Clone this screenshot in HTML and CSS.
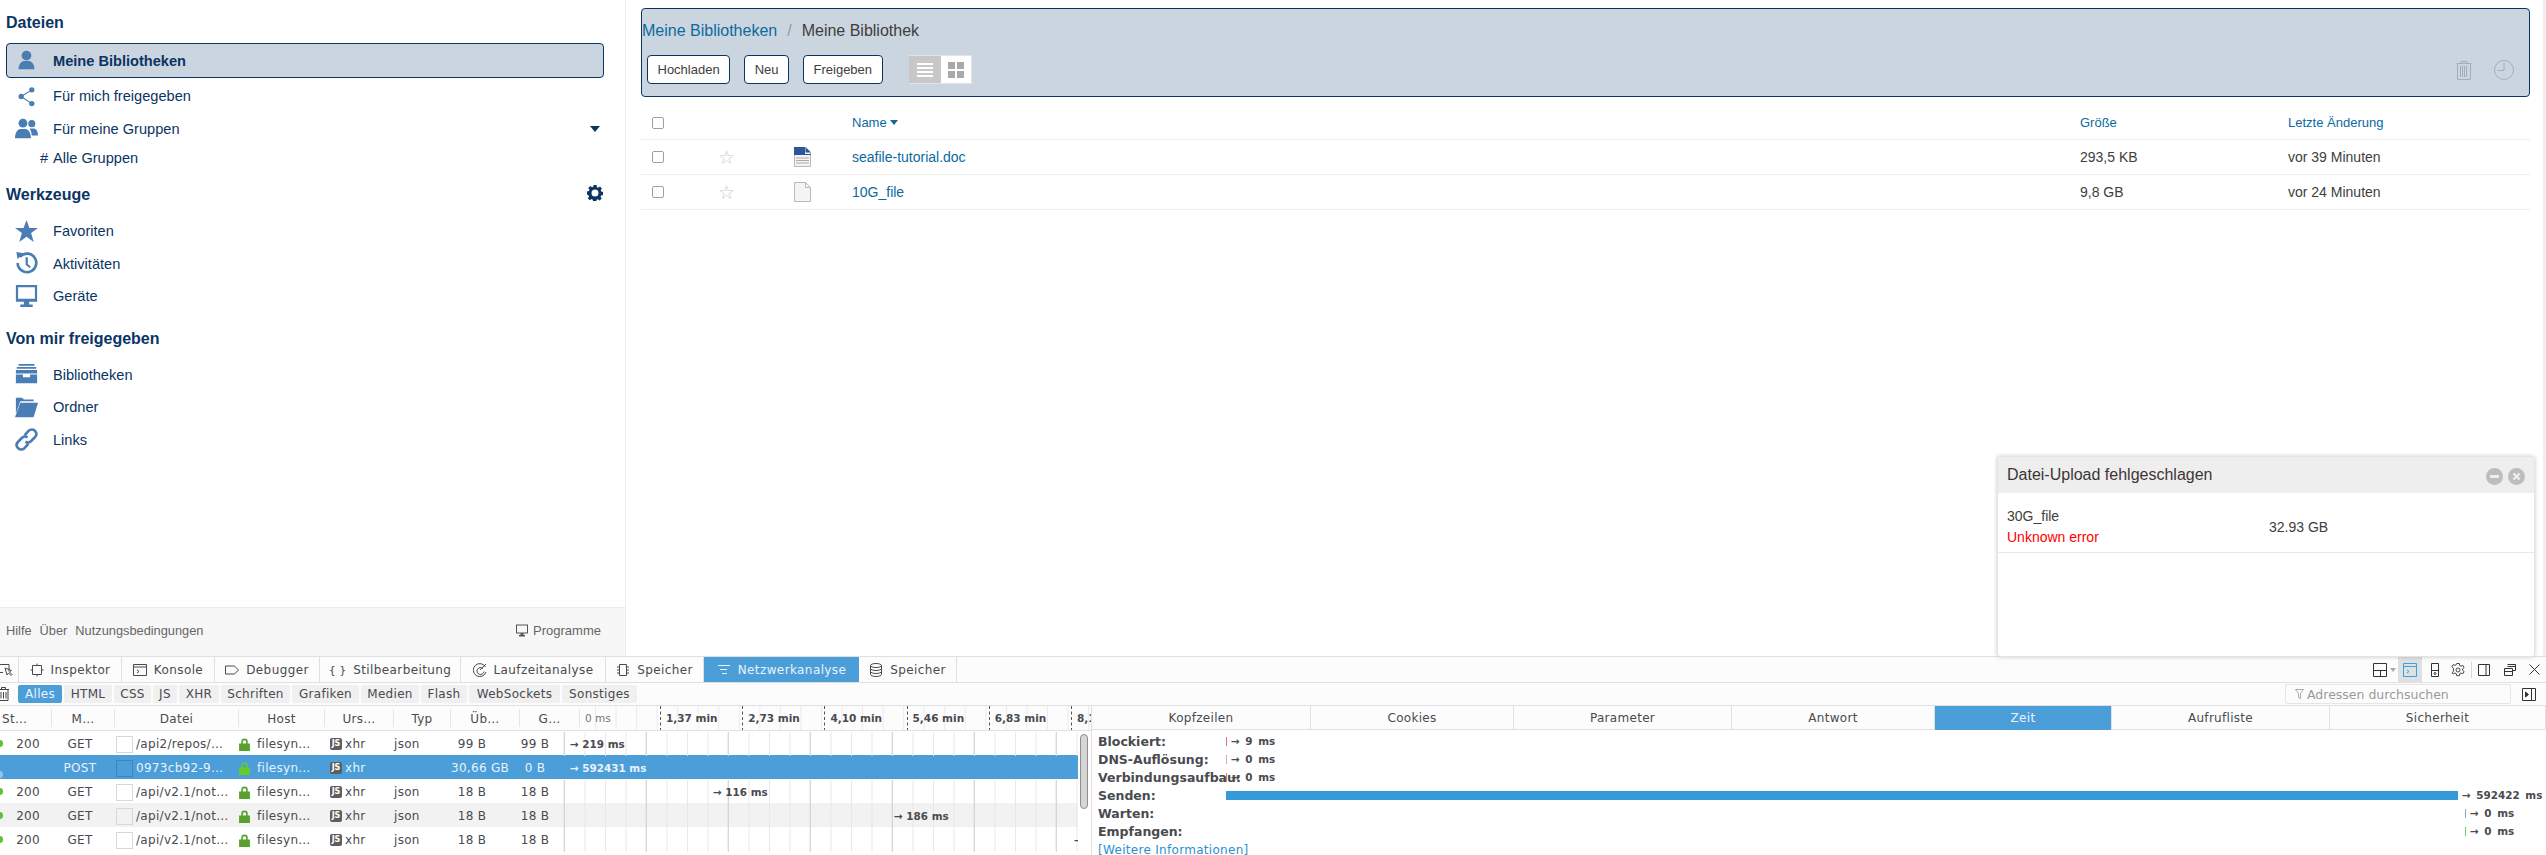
FILE: index.html
```html
<!DOCTYPE html>
<html lang="de">
<head>
    <meta charset="UTF-8">
    <title>Meine Bibliothek</title>
    <link rel="stylesheet" href="styles.css">
</head>
<body>
<div class="app">
    <aside class="sidebar">
        <div class="side-scroll">
            <h3 class="side-title first">Dateien</h3>
            <a class="side-item active">
                <svg class="side-icon" viewBox="0 0 26 26"><circle cx="13" cy="7.500" r="5.500"/><path d="M4 23c0-6 3-9 6-9.500h6c3 .5 6 3.500 6 9.500z"/></svg>
                <span>Meine Bibliotheken</span>
            </a>
            <a class="side-item">
                <svg class="side-icon" viewBox="0 0 26 26"><circle cx="19" cy="5.500" r="3"/><circle cx="7" cy="13" r="3"/><circle cx="19" cy="21" r="3"/><path class="outline thin" d="M7 13l12-7.500M7 13l12 8"/></svg>
                <span>Für mich freigegeben</span>
            </a>
            <a class="side-item">
                <svg class="side-icon" viewBox="0 0 26 26"><circle cx="9" cy="7" r="5"/><circle cx="19" cy="7.500" r="4"/><path d="M0 24c0-7 3-10 6-10.500h6c3 .5 6 3.500 6 10.500z"/><path d="M16.500 13h5c2.500.5 4.500 3 4.500 8h-7c-.3-3-1-6-2.500-8z"/></svg>
                <span>Für meine Gruppen</span>
                <i class="caret"></i>
            </a>
            <a class="side-sub"><span class="hash">#</span>Alle Gruppen</a>

            <h3 class="side-title tools">Werkzeuge
                <svg class="gear" viewBox="0 0 16 16"><path fill-rule="evenodd" d="M6.500 0h3l.4 2.200 1.300.6L12.900 1.500l2 2-1.200 1.800.6 1.300 1.700.4v3l-1.900.4-.6 1.300 1.200 1.700-2 2-1.800-1.200-1.300.6-.4 1.700h-3l-.4-1.800-1.300-.6-1.700 1.200-2-2 1.200-1.700-.6-1.300L0 9.500v-3l1.900-.4.6-1.300-1.200-1.800 2-2 1.700 1.300 1.300-.6zM8 4.500a3.500 3.500 0 1 0 0 7 3.500 3.500 0 0 0 0-7z"/></svg>
            </h3>
            <a class="side-item">
                <svg class="side-icon" viewBox="0 0 26 26"><path d="M13 0l3.300 9h9.700l-7.800 5.800 3 10.200-8.200-6.200L4.800 25l3-10.200L0 9h9.700z"/></svg>
                <span>Favoriten</span>
            </a>
            <a class="side-item">
                <svg class="side-icon" viewBox="0 0 26 26"><path class="outline" d="M5.500 5.500a10.500 10.500 0 1 1-2.500 7"/><path d="M1.500 0l8.500 1.500-7 6.500z"/><path d="M12 6h2.500v7.500l3.500 3-1.500 1.500-4.500-3.500z"/></svg>
                <span>Aktivitäten</span>
            </a>
            <a class="side-item">
                <svg class="side-icon" viewBox="0 0 26 26"><path fill-rule="evenodd" d="M1 0h24v19H16v3h4v3H6v-3h4v-3H1zM3.500 2.500v13h19v-13z"/></svg>
                <span>Geräte</span>
            </a>

            <h3 class="side-title shared">Von mir freigegeben</h3>
            <a class="side-item">
                <svg class="side-icon" viewBox="0 0 26 26"><path d="M4 1h18v2H4zM2 4.500h22v2H2zM1 8h24v4H1zM1 13h8v3h8v-3h8v10H1z"/></svg>
                <span>Bibliotheken</span>
            </a>
            <a class="side-item">
                <svg class="side-icon" viewBox="0 0 26 26"><path d="M1 2h7l2 2h11v2H6L1 20z"/><path d="M6 7.500h20L21 24H0z"/></svg>
                <span>Ordner</span>
            </a>
            <a class="side-item">
                <svg class="side-icon" viewBox="0 0 26 26"><path class="outline" d="M11 8l4-4.500c3-2.500 6-2.300 7.800 0 2 2.300 1.800 4.800-.3 7L18 15c-2 1.800-4.500 1.800-6 .3"/><path class="outline" d="M15 18l-4 4.500c-3 2.500-6 2.300-7.800 0-2-2.300-1.800-4.800.3-7L8 11c2-1.800 4.500-1.800 6-.3"/></svg>
                <span>Links</span>
            </a>
        </div>
        <footer class="side-footer">
            <a>Hilfe</a><a>Über</a><a>Nutzungsbedingungen</a>
            <a class="clients">
                <svg class="clients-icon" viewBox="0 0 12 12"><path fill-rule="evenodd" d="M0 0h12v9H7.500v1.500H9V12H3v-1.500h1.500V9H0zM1 1v7h10V1z"/></svg>
                Programme
            </a>
        </footer>
    </aside>

    <main class="main">
        <div class="toolbar">
            <div class="crumbs"><a>Meine Bibliotheken</a><span class="sep">/</span><span>Meine Bibliothek</span></div>
            <div class="toolbar-row">
                <button class="btn">Hochladen</button>
                <button class="btn">Neu</button>
                <button class="btn">Freigeben</button>
                <div class="view-toggle">
                    <span class="view-btn on">
                        <svg viewBox="0 0 16 16" width="16" height="16" fill="#fff"><path d="M0 1h16v2H0zM0 5h16v2H0zM0 9h16v2H0zM0 13h16v2H0z"/></svg>
                    </span>
                    <span class="view-btn">
                        <svg viewBox="0 0 16 16" width="16" height="16" fill="#a9a9a9"><path d="M0 0h7v7H0zM9 0h7v7H9zM0 9h7v7H0zM9 9h7v7H9z"/></svg>
                    </span>
                </div>
                <div class="toolbar-right">
                    <svg width="16" height="20" viewBox="0 0 16 20" fill="none" stroke="#a5aeb7"><path d="M.5 3.500h15M5 3.500v-2h6v2M1.500 3.500v16h13v-16M4.500 6v11M6.500 6v11M8.500 6v11M10.500 6v11"/></svg>
                    <svg width="20" height="20" viewBox="0 0 20 20" fill="none" stroke="#a5aeb7"><circle cx="10" cy="10" r="9.500"/><path d="M10 3v7.500H3.500"/></svg>
                </div>
            </div>
        </div>
        <div class="file-row head">
            <span class="cell-check"><i class="check"></i></span>
            <span></span><span></span>
            <a class="file-name">Name <i class="sort"></i></a>
            <a>Größe</a>
            <a>Letzte Änderung</a>
        </div>
        <div class="file-row">
            <span class="cell-check"><i class="check"></i></span>
            <span class="star">☆</span>
            <svg class="file-icon" viewBox="0 0 17 20"><path d="M.5.500h11l5 5v14H.500z" fill="#f4f4f4" stroke="#b9b9b9"/><path d="M0 0h11v7h6v1H0z" fill="#2b5797"/><path d="M11.500 0l5.500 5.500h-5.500z" fill="#2b5797"/><path d="M2 11h13M2 13.500h13M2 16h13" stroke="#aaa"/></svg>
            <a class="file-name">seafile-tutorial.doc</a>
            <span>293,5 KB</span>
            <span>vor 39 Minuten</span>
        </div>
        <div class="file-row">
            <span class="cell-check"><i class="check"></i></span>
            <span class="star">☆</span>
            <svg class="file-icon" viewBox="0 0 17 20"><path d="M.5.500h11l5 5v14H.500z" fill="#f4f4f4" stroke="#b9b9b9"/><path d="M11.500.500v5h5" fill="none" stroke="#b9b9b9"/></svg>
            <a class="file-name">10G_file</a>
            <span>9,8 GB</span>
            <span>vor 24 Minuten</span>
        </div>
    </main>

    <section class="upload-popup">
        <div class="popup-head">
            <span>Datei-Upload fehlgeschlagen</span>
            <span class="popup-tools">
                <svg width="17" height="17" viewBox="0 0 17 17"><circle cx="8.500" cy="8.500" r="8.500" fill="#bdbdbd"/><path d="M4 7h9v3H4z" fill="#eee"/></svg>
                <svg width="17" height="17" viewBox="0 0 17 17"><circle cx="8.500" cy="8.500" r="8.500" fill="#bdbdbd"/><path d="M5.500 5.500l6 6M11.500 5.500l-6 6" stroke="#eee" stroke-width="2.400"/></svg>
            </span>
        </div>
        <div class="popup-row">
            <div class="popup-name">30G_file<div class="popup-error">Unknown error</div></div>
            <div>32.93 GB</div>
        </div>
    </section>
</div>

<div class="devtools">
    <div class="dt-tabs">
        <span class="dt-picker">
            <svg width="18" height="18" viewBox="0 0 18 18" fill="none" stroke="#4a4a4f"><path d="M-2 3.500h11v7"/><path d="M-2 11.500h5"/><path d="M5 7l2 7 1.500-2 2.500 2.500 1-1-2.500-2.500 2-1.500z"/></svg>
        </span>
        <span class="dt-tab w-inspector"><svg class="dt-icon" viewBox="0 0 14 14"><path d="M2.500 2.500h9v9h-9zM7 .5v2M7 11.500v2M.5 7h2M11.500 7h2"/></svg>Inspektor</span>
        <span class="dt-tab w-console"><svg class="dt-icon" viewBox="0 0 14 14"><path d="M.5 1.500h13v11H.500zM.5 4h13M4 7l2 1.500L4 10"/></svg>Konsole</span>
        <span class="dt-tab w-debugger"><svg class="dt-icon" viewBox="0 0 14 14"><path d="M.5 3h9l4 4-4 4h-9z"/></svg>Debugger</span>
        <span class="dt-tab w-style"><span class="braces">{ }</span>Stilbearbeitung</span>
        <span class="dt-tab w-perf"><svg class="dt-icon" viewBox="0 0 14 14"><path d="M12.500 4A6.500 6.500 0 1 0 13 9M10 5.500a3.500 3.500 0 1 0 1 3M7 7l6-6"/></svg>Laufzeitanalyse</span>
        <span class="dt-tab w-mem"><svg class="dt-icon" viewBox="0 0 14 14"><path d="M3.500 1.500h7v11h-7zM1 4h2.500M1 7h2.500M1 10h2.500M10.500 4H13M10.500 7H13M10.500 10H13"/></svg>Speicher</span>
        <span class="dt-tab w-net on"><svg class="dt-icon" viewBox="0 0 14 14"><path d="M1 2.500h12M3 6.500h7M5 10.500h5"/></svg>Netzwerkanalyse</span>
        <span class="dt-tab w-store"><svg class="dt-icon" viewBox="0 0 14 14"><ellipse cx="7" cy="2.500" rx="5.500" ry="2"/><path d="M1.500 2.500v9c0 1 2.500 2 5.500 2s5.500-1 5.500-2v-9M1.500 5.500c0 1 2.500 2 5.500 2s5.500-1 5.500-2M1.500 8.500c0 1 2.500 2 5.500 2s5.500-1 5.500-2"/></svg>Speicher</span>
        <div class="dt-actions">
            <svg width="14" height="14" viewBox="0 0 14 14" fill="none" stroke="#333"><path d="M.5.500h13v13H.500zM.5 7.500h13M7.500 7.500v6"/></svg>
            <i class="dock-caret"></i>
            <span class="dt-action-on"><svg width="14" height="14" viewBox="0 0 14 14" fill="none" stroke="#2fa7e0"><path d="M.5.500h13v13H.500zM.5 3.500h13M4 7l2 1.500L4 10"/></svg></span>
            <svg class="act-device" width="8" height="14" viewBox="0 0 8 14" fill="none" stroke="#333"><path d="M.5.500h7v13h-7zM.5 7.500h7"/><circle cx="4" cy="10.500" r="1"/></svg>
            <svg class="act-gear" width="14" height="14" viewBox="0 0 14 14" fill="none" stroke="#444"><circle cx="7" cy="7" r="2"/><path d="M5.700.500h2.600l.4 2 1.300.7 1.800-.8 1.300 2.200-1.500 1.300v1.400l1.500 1.300-1.300 2.200-1.800-.8-1.300.7-.4 2H5.700l-.4-2-1.300-.7-1.800.8L.9 9.800l1.500-1.300V5.100L.9 3.800l1.300-2.200 1.800.8 1.300-.7z"/></svg>
            <i class="act-sep"></i>
            <svg class="act-side" width="12" height="12" viewBox="0 0 12 12" fill="none" stroke="#333"><path d="M.5.500h11v11H.500zM8 .5v11"/></svg>
            <svg class="act-win" width="12" height="12" viewBox="0 0 12 12" fill="none" stroke="#333"><path d="M3.500.500h8v6h-3M.5 4.500h8v7h-8zM.5 7.500h8M3.500 2.500h8"/></svg>
            <svg class="act-close" width="11" height="11" viewBox="0 0 11 11" fill="none" stroke="#333"><path d="M.5.500l10 10M10.500.500l-10 10"/></svg>
        </div>
    </div>

    <div class="dt-filters">
        <svg class="trash" width="9" height="14" viewBox="0 0 9 14" fill="none" stroke="#444"><path d="M-3 2.500h12M-2 2.500v11h10v-11M1 5v6.500M3.500 5v6.500M6 5v6.500M1.500 2.500V.5h4v2"/></svg>
        <span class="flt f-all on">Alles</span>
        <span class="flt f-html">HTML</span>
        <span class="flt f-css">CSS</span>
        <span class="flt f-js">JS</span>
        <span class="flt f-xhr">XHR</span>
        <span class="flt f-font">Schriften</span>
        <span class="flt f-img">Grafiken</span>
        <span class="flt f-med">Medien</span>
        <span class="flt f-flash">Flash</span>
        <span class="flt f-ws">WebSockets</span>
        <span class="flt f-etc">Sonstiges</span>
        <div class="url-filter">
            <svg width="9" height="10" viewBox="0 0 9 10" fill="none" stroke="#aaa"><path d="M.5.500h8L5.500 4.500v5l-2-1v-4z"/></svg>
            Adressen durchsuchen
        </div>
        <svg class="pane-toggle" width="14" height="13" viewBox="0 0 14 13" fill="none" stroke="#333"><path d="M.5.500h13v12H.500zM9.500.500v12"/><path d="M3.500 4v5l3-2.500z" fill="#333"/></svg>
    </div>

    <div class="dt-split">
        <div class="net">
            <div class="net-head">
                <span class="h-status">St…</span>
                <span>M…</span>
                <span>Datei</span>
                <span>Host</span>
                <span>Urs…</span>
                <span>Typ</span>
                <span>Üb…</span>
                <span>G…</span>
                <div class="ticks">
                    <span class="tick-zero">0 ms</span>
                    <span class="tick">1,37 min</span>
                    <span class="tick">2,73 min</span>
                    <span class="tick">4,10 min</span>
                    <span class="tick">5,46 min</span>
                    <span class="tick">6,83 min</span>
                    <span class="tick">8,1</span>
                </div>
            </div>
            <div class="net-body">
                <div class="net-rows">
                    <div class="net-row">
                        <span class="c-status"><i class="dot"></i>200</span><span class="c-method">GET</span>
                        <span class="c-file"><i class="thumb"></i>/api2/repos/…</span>
                        <span class="c-host"><svg class="lock" viewBox="0 0 10 12"><path d="M2 5V3.500a3 3 0 0 1 6 0V5h2v7H0V5zM3.500 5h3V3.500a1.500 1.500 0 0 0-3 0z"/></svg>filesyn…</span>
                        <span class="c-cause"><b class="js">JS</b>xhr</span><span>json</span>
                        <span class="c-size">99 B</span><span class="c-size2">99 B</span>
                        <span class="c-wf"><b style="margin-left:20px">→ 219 ms</b></span>
                    </div>
                    <div class="net-row sel">
                        <span class="c-status"><i class="dot"></i></span><span class="c-method">POST</span>
                        <span class="c-file"><i class="thumb"></i>0973cb92-9…</span>
                        <span class="c-host"><svg class="lock" viewBox="0 0 10 12"><path d="M2 5V3.500a3 3 0 0 1 6 0V5h2v7H0V5zM3.500 5h3V3.500a1.500 1.500 0 0 0-3 0z"/></svg>filesyn…</span>
                        <span class="c-cause"><b class="js">JS</b>xhr</span><span></span>
                        <span class="c-size">30,66 GB</span><span class="c-size2">0 B</span>
                        <span class="c-wf"><b style="margin-left:20px">→ 592431 ms</b></span>
                    </div>
                    <div class="net-row">
                        <span class="c-status"><i class="dot"></i>200</span><span class="c-method">GET</span>
                        <span class="c-file"><i class="thumb"></i>/api/v2.1/not…</span>
                        <span class="c-host"><svg class="lock" viewBox="0 0 10 12"><path d="M2 5V3.500a3 3 0 0 1 6 0V5h2v7H0V5zM3.500 5h3V3.500a1.500 1.500 0 0 0-3 0z"/></svg>filesyn…</span>
                        <span class="c-cause"><b class="js">JS</b>xhr</span><span>json</span>
                        <span class="c-size">18 B</span><span class="c-size2">18 B</span>
                        <span class="c-wf"><b style="margin-left:163px">→ 116 ms</b></span>
                    </div>
                    <div class="net-row odd">
                        <span class="c-status"><i class="dot"></i>200</span><span class="c-method">GET</span>
                        <span class="c-file"><i class="thumb"></i>/api/v2.1/not…</span>
                        <span class="c-host"><svg class="lock" viewBox="0 0 10 12"><path d="M2 5V3.500a3 3 0 0 1 6 0V5h2v7H0V5zM3.500 5h3V3.500a1.500 1.500 0 0 0-3 0z"/></svg>filesyn…</span>
                        <span class="c-cause"><b class="js">JS</b>xhr</span><span>json</span>
                        <span class="c-size">18 B</span><span class="c-size2">18 B</span>
                        <span class="c-wf"><b style="margin-left:344px">→ 186 ms</b></span>
                    </div>
                    <div class="net-row">
                        <span class="c-status"><i class="dot"></i>200</span><span class="c-method">GET</span>
                        <span class="c-file"><i class="thumb"></i>/api/v2.1/not…</span>
                        <span class="c-host"><svg class="lock" viewBox="0 0 10 12"><path d="M2 5V3.500a3 3 0 0 1 6 0V5h2v7H0V5zM3.500 5h3V3.500a1.500 1.500 0 0 0-3 0z"/></svg>filesyn…</span>
                        <span class="c-cause"><b class="js">JS</b>xhr</span><span>json</span>
                        <span class="c-size">18 B</span><span class="c-size2">18 B</span>
                        <span class="c-wf"><b style="margin-left:524px">→ 92 ms</b></span>
                    </div>
                </div>
                <div class="net-scroll"><i class="net-thumb"></i></div>
            </div>
        </div>

        <div class="detail">
            <div class="detail-tabs">
                <span class="d-tab">Kopfzeilen</span>
                <span class="d-tab">Cookies</span>
                <span class="d-tab">Parameter</span>
                <span class="d-tab">Antwort</span>
                <span class="d-tab on">Zeit</span>
                <span class="d-tab">Aufrufliste</span>
                <span class="d-tab">Sicherheit</span>
            </div>
            <div class="timings">
                <div class="t-row"><b class="t-label">Blockiert:</b><span class="t-track"><i class="t-bar" style="background:#e57180"></i><b class="t-val">→ 9 ms</b></span></div>
                <div class="t-row"><b class="t-label">DNS-Auflösung:</b><span class="t-track"><i class="t-bar" style="background:#d7a6e8"></i><b class="t-val">→ 0 ms</b></span></div>
                <div class="t-row"><b class="t-label">Verbindungsaufbau:</b><span class="t-track"><i class="t-bar" style="background:#d98a4a"></i><b class="t-val">→ 0 ms</b></span></div>
                <div class="t-row"><b class="t-label">Senden:</b><span class="t-track"><i class="t-send"></i><b class="t-val">→ 592422 ms</b></span></div>
                <div class="t-row"><b class="t-label">Warten:</b><span class="t-track"><i class="t-bar late" style="background:#8fa5c7"></i><b class="t-val">→ 0 ms</b></span></div>
                <div class="t-row"><b class="t-label">Empfangen:</b><span class="t-track"><i class="t-bar late" style="background:#6ccf5e"></i><b class="t-val">→ 0 ms</b></span></div>
                <a class="t-more">[Weitere Informationen]</a>
            </div>
        </div>
    </div>
</div>
</body>
</html>
```
FILE: styles.css
```css
* {
    box-sizing: border-box;
}
html, body {
    margin: 0;
    height: 855px;
    overflow: hidden;
}
body {
    font-family: "Liberation Sans", Arial, sans-serif;
    font-size: 14px;
    color: #3e3e3e;
    background: #fff;
    display: flex;
    flex-direction: column;
}

/* app */
.app {
    position: relative;
    height: 656px;
    flex: none;
    display: flex;
    border-right: 3px solid #f0f0f0;
}
.sidebar {
    width: 626px;
    display: flex;
    flex-direction: column;
    border-right: 1px solid #eeeeee;
    color: #0a3463;
}
.side-scroll {
    flex: 1;
    padding: 0 21px 0 6px;
}
.side-title {
    margin: 0;
    height: 24px;
    font-size: 16px;
    line-height: 24px;
    display: flex;
    justify-content: space-between;
    align-items: center;
}
.side-title.first {
    margin-top: 11px;
    margin-bottom: 8px;
}
.side-title.tools {
    margin-top: 12px;
    margin-bottom: 8px;
}
.side-title.shared {
    margin-top: 14px;
    margin-bottom: 8px;
}
.gear {
    width: 16px;
    height: 16px;
    fill: #0a3463;
    margin-right: 1px;
    margin-bottom: 4px;
}
.side-item {
    display: flex;
    align-items: center;
    height: 32.500px;
    padding-left: 8px;
    font-size: 14.600px;
    border: 1px solid transparent;
}
.side-item.active {
    height: 35px;
    margin-bottom: 2px;
    background: #cbd5df;
    border-color: #0a3463;
    border-radius: 4px;
    font-weight: bold;
}
.side-icon {
    width: 23px;
    height: 23px;
    margin-right: 15px;
    fill: #4a7db3;
    flex: none;
}
.side-icon .outline {
    fill: none;
    stroke: #4a7db3;
    stroke-width: 3;
}
.side-icon .thin {
    stroke-width: 1.200;
}
.caret {
    margin-left: auto;
    margin-right: 3px;
    border: 5px solid transparent;
    border-top: 6px solid #0a3463;
    border-bottom: 0;
}
.side-sub {
    display: block;
    height: 26px;
    line-height: 26px;
    font-size: 14.600px;
    padding-left: 34px;
}
.hash {
    display: inline-block;
    width: 13px;
}
.side-footer {
    height: 49px;
    background: #f7f7f7;
    border-top: 1px solid #ebebeb;
    display: flex;
    align-items: center;
    gap: 8px;
    padding: 0 24px 3px 6px;
    font-size: 12.800px;
    color: #666;
}
.clients {
    margin-left: auto;
    display: flex;
    align-items: center;
    gap: 5px;
    font-size: 13px;
}
.clients-icon {
    width: 12px;
    height: 13px;
    fill: #555;
}

/* main */
.main {
    flex: 1;
    padding: 8px 13px 0 15px;
}
.toolbar {
    height: 89px;
    background: #cbd5df;
    border: 1px solid #0a3463;
    border-radius: 4px;
    padding: 0 5px;
}
.crumbs {
    height: 46px;
    line-height: 44px;
    font-size: 16px;
    color: #3e3e3e;
    margin-left: -5px;
}
.crumbs a {
    color: #0b6a9e;
}
.crumbs .sep {
    color: #999;
    margin: 0 10px;
}
.toolbar-row {
    display: flex;
    align-items: center;
    gap: 14px;
}
.btn {
    height: 29px;
    padding: 0 9.500px;
    font: 13px "Liberation Sans", Arial, sans-serif;
    color: #3e3e3e;
    background: #fff;
    border: 1px solid #0a3463;
    border-radius: 4px;
}
.view-toggle {
    display: flex;
    margin-left: 12px;
    border: 1px solid #e4e4e4;
    border-left: 0;
}
.view-btn {
    width: 30px;
    height: 27px;
    display: flex;
    align-items: center;
    justify-content: center;
    background: #fff;
}
.view-btn.on {
    width: 32px;
    background: #c8c8c8;
}
.toolbar-right {
    margin-left: auto;
    display: flex;
    align-items: center;
    gap: 22px;
    padding-right: 10px;
}
.file-row {
    display: grid;
    grid-template-columns: 77px 76px 58px 1228px 208px 1fr;
    align-items: center;
    height: 35px;
    border-bottom: 1px solid #eeeeee;
    font-size: 14px;
}
.file-row.head {
    height: 34px;
    margin-top: 9px;
    font-size: 13px;
}
.file-row a {
    color: #0b6a9e;
}
.cell-check {
    padding-left: 11px;
    display: flex;
}
.check {
    width: 12px;
    height: 12px;
    background: #fff;
    border: 1px solid #a0a0a0;
    border-radius: 2px;
}
.star {
    font: 19px "DejaVu Sans", sans-serif;
    color: #c9c9c9;
    line-height: 1;
}
.file-icon {
    width: 17px;
    height: 20px;
}
.sort {
    display: inline-block;
    border: 4px solid transparent;
    border-top: 5px solid #0b6a9e;
    border-bottom: 0;
    vertical-align: 2px;
}

/* popup lies over the page */
.upload-popup {
    position: absolute;
    right: 8px;
    bottom: -1px;
    width: 538px;
    height: 201px;
    background: #fff;
    border: 1px solid #e4e4e4;
    border-radius: 3px;
    box-shadow: 0 0 4px rgba(0, 0, 0, .2);
}
.popup-head {
    height: 36px;
    background: #eeeeee;
    display: flex;
    justify-content: space-between;
    align-items: center;
    padding: 0 9px 0 9px;
    font-size: 16px;
    color: #3d3535;
}
.popup-tools {
    display: flex;
    gap: 5px;
    margin-top: 3px;
}
.popup-row {
    display: grid;
    grid-template-columns: 262px 1fr;
    align-items: center;
    height: 60px;
    padding: 9px 0 0 9px;
    border-bottom: 1px solid #e8e8e8;
}
.popup-name {
    line-height: 21px;
}
.popup-error {
    color: #f00;
}

/* devtools */
.devtools {
    height: 199px;
    flex: none;
    display: flex;
    flex-direction: column;
    font-family: "DejaVu Sans", sans-serif;
    font-size: 12px;
    color: #4a4a4f;
    background: #fcfcfc;
    border-top: 1px solid #e0e0e2;
}
.dt-tabs {
    height: 26px;
    flex: none;
    display: flex;
    border-bottom: 1px solid #e0e0e2;
}
.dt-picker {
    width: 19px;
    border-right: 1px solid #e0e0e2;
    display: flex;
    align-items: center;
}
.dt-tab {
    display: flex;
    align-items: center;
    justify-content: center;
    gap: 7px;
    height: 25px;
    padding-top: 1px;
    border-right: 1px solid #e0e0e2;
    letter-spacing: .4px;
}
.w-inspector { width: 103px; }
.w-console { width: 93px; }
.w-debugger { width: 105px; }
.w-style { width: 141px; }
.w-perf { width: 145px; }
.w-mem { width: 98px; }
.w-net { width: 155px; }
.w-store { width: 98px; }
.dt-tab.on {
    background: #4c9ed9;
    color: #e8f3fb;
    border-right: 0;
}
.dt-icon {
    width: 14px;
    height: 14px;
    fill: none;
    stroke: #4a4a4f;
    flex: none;
}
.dt-tab.on .dt-icon {
    stroke: #e8f3fb;
}
.braces {
    letter-spacing: 0;
    font-size: 11px;
}
.dt-actions {
    margin-left: auto;
    display: flex;
    align-items: center;
    height: 25px;
    padding-right: 6px;
}
.dock-caret {
    border: 3px solid transparent;
    border-top: 4px solid #aaa;
    border-bottom: 0;
    margin: 0 2px 0 3px;
}
.dt-action-on {
    width: 24px;
    height: 25px;
    background: #e0e0e2;
    display: flex;
    align-items: center;
    justify-content: center;
}
.act-device { margin-left: 9px; }
.act-gear { margin-left: 12px; }
.act-sep {
    width: 1px;
    height: 16px;
    background: #d8d8d8;
    margin-left: 6px;
}
.act-side { margin-left: 6px; }
.act-win { margin-left: 14px; }
.act-close { margin-left: 13px; }

.dt-filters {
    height: 23px;
    flex: none;
    display: flex;
    align-items: center;
    border-bottom: 1px solid #e0e0e2;
}
.trash {
    width: 9px;
    margin-right: 9px;
}
.flt {
    height: 18px;
    line-height: 19px;
    text-align: center;
    background: #f0f0f1;
    border-radius: 2px;
    margin-right: 2px;
    letter-spacing: .3px;
}
.flt.on {
    background: #4c9ed9;
    color: #e8f3fb;
}
.f-all { width: 44px; }
.f-html { width: 48px; }
.f-css { width: 37px; }
.f-js { width: 24px; }
.f-xhr { width: 40px; }
.f-font { width: 69px; }
.f-img { width: 67px; }
.f-med { width: 58px; }
.f-flash { width: 46px; }
.f-ws { width: 91px; }
.f-etc { width: 75px; }
.url-filter {
    margin-left: auto;
    width: 226px;
    height: 20px;
    display: flex;
    align-items: center;
    gap: 3px;
    padding-left: 9px;
    background: #fcfcfc;
    border: 1px solid #e6e6e8;
    border-radius: 2px;
    color: #9a9a9c;
    font-size: 12.500px;
}
.pane-toggle {
    margin: 0 10px 0 11px;
}

.dt-split {
    flex: 1;
    display: flex;
    min-height: 0;
}
.net {
    width: 1091px;
    flex: none;
    overflow: hidden;
    background: #fff;
}
.net-head {
    height: 25px;
    display: grid;
    grid-template-columns: 52px 63px 124px 86px 69px 57px 69px 60px 1fr;
    align-items: center;
    text-align: center;
    background: #fcfcfc;
    border-bottom: 1px solid #e0e0e2;
    letter-spacing: .3px;
}
.net-head > span {
    height: 18px;
    line-height: 20px;
    border-right: 1px solid #e6e6e8;
}
.net-head .h-status {
    text-align: left;
    padding-left: 2px;
}
.ticks {
    height: 24px;
    display: grid;
    grid-template-columns: 80px repeat(5, 82.200px) 1fr;
    text-align: left;
    background-image: linear-gradient(to right, #ebebeb 1px, transparent 1px);
    background-size: 20.550px 100%;
    background-position: 15px 0;
    overflow: hidden;
}
.tick-zero {
    line-height: 25px;
    padding-left: 5px;
    font-size: 10.500px;
    color: #777;
    letter-spacing: 0;
}
.tick {
    line-height: 25px;
    padding-left: 5px;
    font-size: 10.500px;
    font-weight: bold;
    letter-spacing: 0;
    border-left: 1px dashed #555;
    white-space: nowrap;
}
.net-body {
    display: flex;
    height: 125px;
}
.net-rows {
    width: 1078px;
    flex: none;
    overflow: hidden;
}
.net-row {
    height: 24px;
    padding-top: 1px;
    display: grid;
    grid-template-columns: 52px 63px 124px 86px 69px 57px 69px 30px 1fr;
    align-items: center;
    white-space: nowrap;
    letter-spacing: .3px;
}
.net-row.odd {
    background: #f2f2f2;
}
.net-row.sel {
    background: #4c9ed9;
    color: #e8f3fb;
}
.c-status {
    display: flex;
    align-items: center;
    padding-right: 12px;
    justify-content: flex-end;
    position: relative;
}
.dot {
    position: absolute;
    left: -4px;
    top: 3px;
    width: 7px;
    height: 7px;
    border-radius: 50%;
    background: #5ec42e;
}
.sel .dot {
    background: #8fc6ec;
}
.c-method {
    text-align: center;
    padding-right: 7px;
}
.c-file {
    display: flex;
    align-items: center;
    gap: 3px;
    padding-left: 1px;
}
.thumb {
    width: 17px;
    height: 17px;
    background: #fff;
    border: 1px solid #d8d8d8;
}
.odd .thumb {
    background: #f2f2f2;
}
.sel .thumb {
    background: #4c9ed9;
    border-color: #3a86bd;
}
.c-host {
    display: flex;
    align-items: center;
    gap: 6px;
}
.lock {
    width: 11px;
    height: 13px;
    fill: #57a12c;
    margin-right: 1px;
}
.sel .lock {
    fill: #66c92e;
}
.c-cause {
    display: flex;
    align-items: center;
    gap: 3px;
    padding-left: 5px;
}
.js {
    width: 12px;
    height: 12px;
    border-radius: 2px;
    background: #5e5e5e;
    color: #fff;
    font-size: 8px;
    line-height: 12px;
    text-align: center;
    letter-spacing: 0;
}
.c-size {
    text-align: center;
    padding-right: 27px;
}
.c-size2 {
    text-align: center;
}
.c-wf {
    height: 24px;
    line-height: 24px;
    overflow: hidden;
    letter-spacing: 0;
    font-size: 10.400px;
    background-image: linear-gradient(to right, #cfcfcf 1px, transparent 1px), linear-gradient(to right, #e8e8e8 1px, transparent 1px);
    background-size: 82px 100%, 20.500px 100%;
    background-position: 95.700px 0, 14px 0;
}
.sel .c-wf {
    background-image: none;
}
.c-wf b {
    display: inline-block;
}
.net-scroll {
    width: 13px;
    padding: 3px 2px 0 2px;
    background: #fff;
}
.net-thumb {
    display: block;
    width: 8px;
    height: 75px;
    background: #d6d6d6;
    border: 1px solid #8e8e8e;
    border-radius: 4px;
}
.detail {
    flex: 1;
    min-width: 0;
    background: #fff;
    border-left: 1px solid #e0e0e2;
}
.detail-tabs {
    height: 24px;
    display: grid;
    grid-template-columns: 219px 203px 218px 203px 177px 218px 1fr;
    background: #fcfcfc;
    border-bottom: 1px solid #e0e0e2;
    letter-spacing: .3px;
}
.d-tab {
    line-height: 24px;
    text-align: center;
    border-right: 1px solid #e0e0e2;
}
.d-tab.on {
    background: #4c9ed9;
    color: #e8f3fb;
}
.timings {
    padding: 2px 0 0 6px;
    font-size: 12px;
}
.t-row {
    display: flex;
    height: 18px;
    align-items: center;
}
.t-label {
    width: 128px;
    flex: none;
    font-size: 12.500px;
    white-space: nowrap;
}
.t-track {
    display: flex;
    align-items: center;
    gap: 4px;
    font-size: 10.400px;
    height: 18px;
    white-space: nowrap;
}
.t-bar {
    width: 1px;
    height: 9px;
}
.t-bar.late {
    margin-left: 1239px;
}
.t-send {
    width: 1232px;
    height: 9px;
    background: #349bd6;
    flex: none;
}
.t-val {
    word-spacing: 2px;
}
.t-more {
    color: #2a90d0;
    letter-spacing: .3px;
    line-height: 20px;
}
```
